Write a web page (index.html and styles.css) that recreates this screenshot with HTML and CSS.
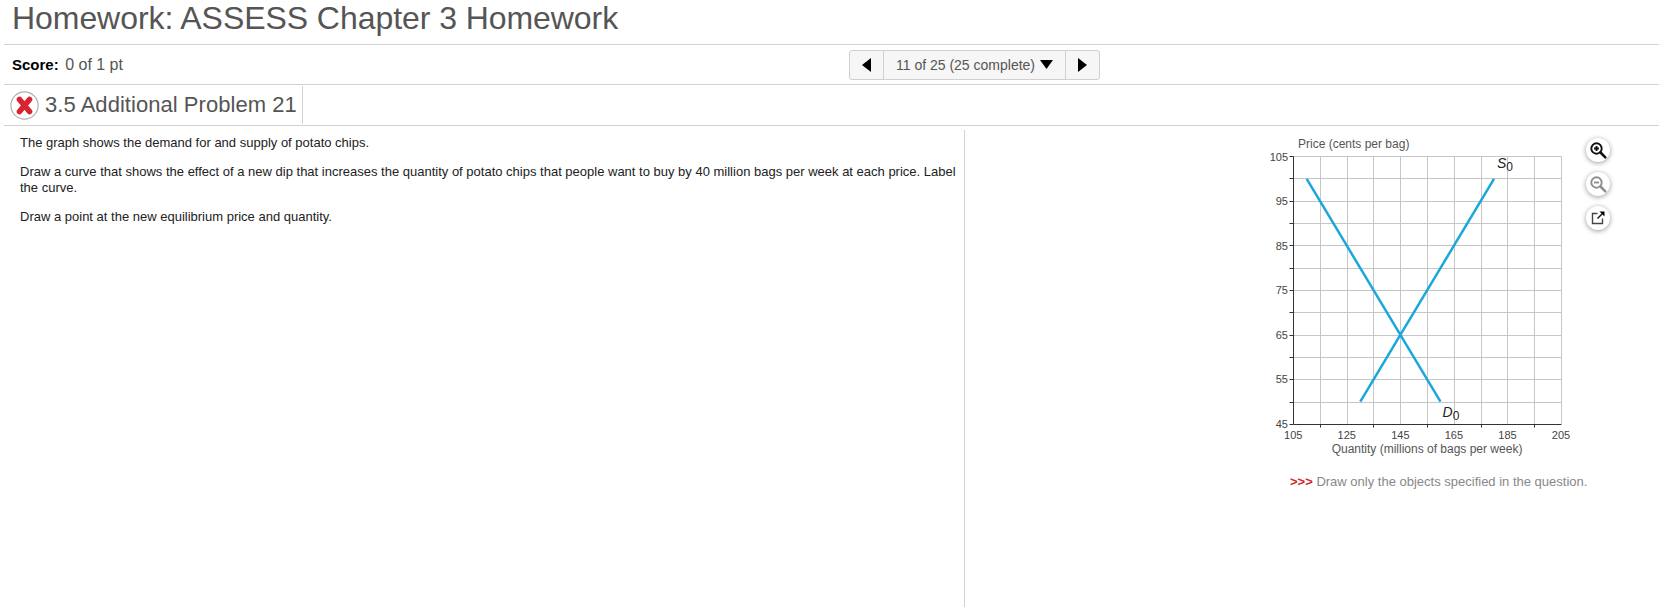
FILE: index.html
```html
<!DOCTYPE html>
<html lang="en">
<head>
<meta charset="utf-8">
<title>Homework: ASSESS Chapter 3 Homework</title>
<link rel="stylesheet" href="styles.css">
</head>
<body>
<header class="title-bar"><h1 class="title">Homework: ASSESS Chapter 3 Homework</h1></header>
<div class="score-bar">
  <div class="score"><b>Score:</b> 0 of 1 pt</div>
  <nav class="pager">
    <button class="pager-btn pager-arrow"><svg width="11" height="14" viewBox="0 0 11 14"><path class="fill-black" d="M10 0v14L1 7z"/></svg></button>
    <button class="pager-btn pager-mid">11 of 25 (25 complete)<svg class="caret" width="13" height="9" viewBox="0 0 13 9"><path class="fill-black" d="M0 0h13L6.5 9z"/></svg></button>
    <button class="pager-btn pager-arrow"><svg width="11" height="14" viewBox="0 0 11 14"><path class="fill-black" d="M1 0v14l9-7z"/></svg></button>
  </nav>
</div>
<div class="problem-bar">
  <div class="problem-name">
    <svg class="status" width="29" height="29" viewBox="0 0 29 29"><circle cx="14.5" cy="14.5" r="13.6" fill="#fff" stroke="#b0b0b0" stroke-width="1.2"/><path d="M9.5 8.5l10 12M19.5 8.5l-10 12" stroke="#d9232e" stroke-width="5.6" stroke-linecap="round"/></svg>
    <span>3.5 Additional Problem 21</span>
  </div>
</div>
<main class="content">
  <section class="question">
    <p>The graph shows the demand for and supply of potato chips.</p>
    <p>Draw a curve that shows the effect of a new dip that increases the quantity of potato chips that people want to buy by 40 million bags per week at each price. Label the curve.</p>
    <p>Draw a point at the new equilibrium price and quantity.</p>
  </section>
  <section class="graph-panel">
    <svg class="graph" width="330" height="332" viewBox="0 0 330 332">
      <g class="grid">
        <path d="M60.5 26.5V294M87.5 26.5V294M113.5 26.5V294M140.5 26.5V294M167.5 26.5V294M194.5 26.5V294M221.5 26.5V294M247.5 26.5V294M274.5 26.5V294M301.5 26.5V294"/>
        <path d="M33.5 26.5H301.5M33.5 48.5H301.5M33.5 71.5H301.5M33.5 93.5H301.5M33.5 115.5H301.5M33.5 138.5H301.5M33.5 160.5H301.5M33.5 182.5H301.5M33.5 205.5H301.5M33.5 227.5H301.5M33.5 249.5H301.5M33.5 272.5H301.5"/>
      </g>
      <path class="axis" d="M33.5 26.5V294.5H301.5"/>
      <path class="axis" d="M29.5 26.5h4M29.5 48.5h4M29.5 71.5h4M29.5 93.5h4M29.5 115.5h4M29.5 138.5h4M29.5 160.5h4M29.5 182.5h4M29.5 205.5h4M29.5 227.5h4M29.5 249.5h4M29.5 272.5h4M29.5 294.5h4"/>
      <path class="axis" d="M60.5 294.5v3M113.5 294.5v3M167.5 294.5v3M221.5 294.5v3M274.5 294.5v3"/>
      <path class="curve" d="M46.7 48.9L180.5 271.6M100.3 271.6L234 48.9"/>
      <g class="ylabels">
        <text x="28" y="30.5">105</text><text x="28" y="75">95</text><text x="28" y="119.5">85</text><text x="28" y="164">75</text><text x="28" y="208.5">65</text><text x="28" y="253">55</text><text x="28" y="298">45</text>
      </g>
      <g class="xlabels">
        <text x="33.3" y="309">105</text><text x="86.8" y="309">125</text><text x="140.4" y="309">145</text><text x="193.9" y="309">165</text><text x="247.5" y="309">185</text><text x="301" y="309">205</text>
      </g>
      <text class="axis-title" x="38" y="18">Price (cents per bag)</text>
      <text class="axis-title centered" x="167" y="323">Quantity (millions of bags per week)</text>
      <text class="curve-label" x="237" y="38">S<tspan class="sub" dy="3">0</tspan></text>
      <text class="curve-label" x="182.5" y="287">D<tspan class="sub" dy="3">0</tspan></text>
    </svg>
    <p class="hint"><b class="hint-mark">&gt;&gt;&gt;</b> Draw only the objects specified in the question.</p>
    <div class="tools">
      <button class="tool"><svg width="20" height="20" viewBox="0 0 20 20"><circle cx="8.5" cy="8.5" r="5.2" class="ring dark"/><path class="ring dark" d="M6 8.5h5M8.5 6v5"/><path class="handle dark" d="M12.5 12.5l4.8 4.8"/></svg></button>
      <button class="tool"><svg width="20" height="20" viewBox="0 0 20 20"><circle cx="8.5" cy="8.5" r="5.2" class="ring light"/><path class="ring light" d="M6 8.5h5"/><path class="handle light" d="M12.5 12.5l4.8 4.8"/></svg></button>
      <button class="tool"><svg width="20" height="20" viewBox="0 0 20 20"><path class="thin mid" d="M9.5 5.5H4.5v10h10v-5"/><path class="thin dark" d="M9.5 10.5l5-5"/><path class="fill-black" d="M11.5 3.5H16.5v5z"/></svg></button>
    </div>
  </section>
</main>
</body>
</html>
```
FILE: styles.css
```css
* { box-sizing: border-box; }
html, body { margin: 0; padding: 0; }
body {
  background: #fff;
  color: #000;
  font-family: "Liberation Sans", Arial, sans-serif;
  height: 607px;
  overflow: hidden;
  display: flex;
  flex-direction: column;
}
.title-bar {
  height: 45px;
  margin-left: 4px;
  border-bottom: 1px solid #d2d2d2;
  padding-left: 8px;
}
.title {
  margin: 0;
  font-size: 32px;
  font-weight: 400;
  line-height: 36px;
  letter-spacing: -0.06px;
  color: #555;
}
.score-bar {
  height: 40px;
  margin-left: 4px;
  border-bottom: 1px solid #d2d2d2;
  padding-left: 8px;
  display: flex;
  align-items: center;
}
.score { font-size: 16px; color: #555; width: 837px; }
.score b { color: #000; font-size: 15px; margin-right: 2px; }
.pager {
  display: flex;
  height: 30px;
  width: 251px;
  border: 1px solid #d0d0d0;
  border-radius: 3px;
  background: #f6f6f6;
}
.pager-btn {
  border: 0;
  background: none;
  padding: 0;
  margin: 0;
  display: flex;
  align-items: center;
  justify-content: center;
  font-family: inherit;
  font-size: 14px;
  color: #555;
}
.pager-arrow { width: 33px; }
.pager-mid {
  flex: 1;
  gap: 5px;
  border-left: 1px solid #d0d0d0;
  border-right: 1px solid #d0d0d0;
}
.fill-black { fill: #000; }
.problem-bar {
  height: 41px;
  margin-left: 4px;
  border-bottom: 1px solid #d2d2d2;
  padding-top: 1px;
}
.problem-name {
  width: 299px;
  height: 38px;
  border-right: 1px solid #d2d2d2;
  display: flex;
  align-items: center;
  gap: 6px;
  padding-left: 6px;
  font-size: 22px;
  letter-spacing: 0.04px;
  color: #555;
  white-space: nowrap;
}
.status { flex: none; }
.content { flex: 1; display: flex; padding-top: 4px; min-height: 0; }
.question {
  width: 965px;
  flex: none;
  border-right: 1px solid #d2d2d2;
  padding: 5px 6px 0 20px;
  font-size: 13px;
  line-height: 16px;
  color: #222;
}
.question p { margin: 0 0 13px; }
.graph-panel { flex: 1; position: relative; padding-left: 295px; }
.graph { display: block; }
.grid path { stroke: #c6c6c6; stroke-width: 1; fill: none; }
.axis { stroke: #333; stroke-width: 1; fill: none; }
.curve { stroke: #1ca7dc; stroke-width: 2.5; fill: none; }
.ylabels text { font-size: 11px; fill: #444; text-anchor: end; }
.xlabels text { font-size: 11px; fill: #444; text-anchor: middle; }
.axis-title { font-size: 12px; fill: #555; }
.centered { text-anchor: middle; }
.curve-label { font-size: 14px; font-style: italic; fill: #222; }
.sub { font-style: normal; font-size: 12px; }
.hint {
  margin: 12px 0 0 30px;
  font-size: 13px;
  line-height: 16px;
  color: #888;
  white-space: nowrap;
}
.hint-mark { color: #d2232a; }
.tools {
  position: absolute;
  left: 621px;
  top: 8px;
  display: flex;
  flex-direction: column;
  gap: 10px;
}
.tool {
  width: 24px;
  height: 24px;
  border: 0;
  padding: 0;
  border-radius: 50%;
  background: #fff;
  box-shadow: 0 1px 5px rgba(0, 0, 0, .4);
  display: flex;
  align-items: center;
  justify-content: center;
}
.ring { fill: none; stroke-width: 1.9; }
.thin { fill: none; stroke-width: 1.4; }
.handle { fill: none; stroke-width: 2.6; stroke-linecap: round; }
.dark { stroke: #111; }
.light { stroke: #8f8f8f; }
.mid { stroke: #444; }
```
